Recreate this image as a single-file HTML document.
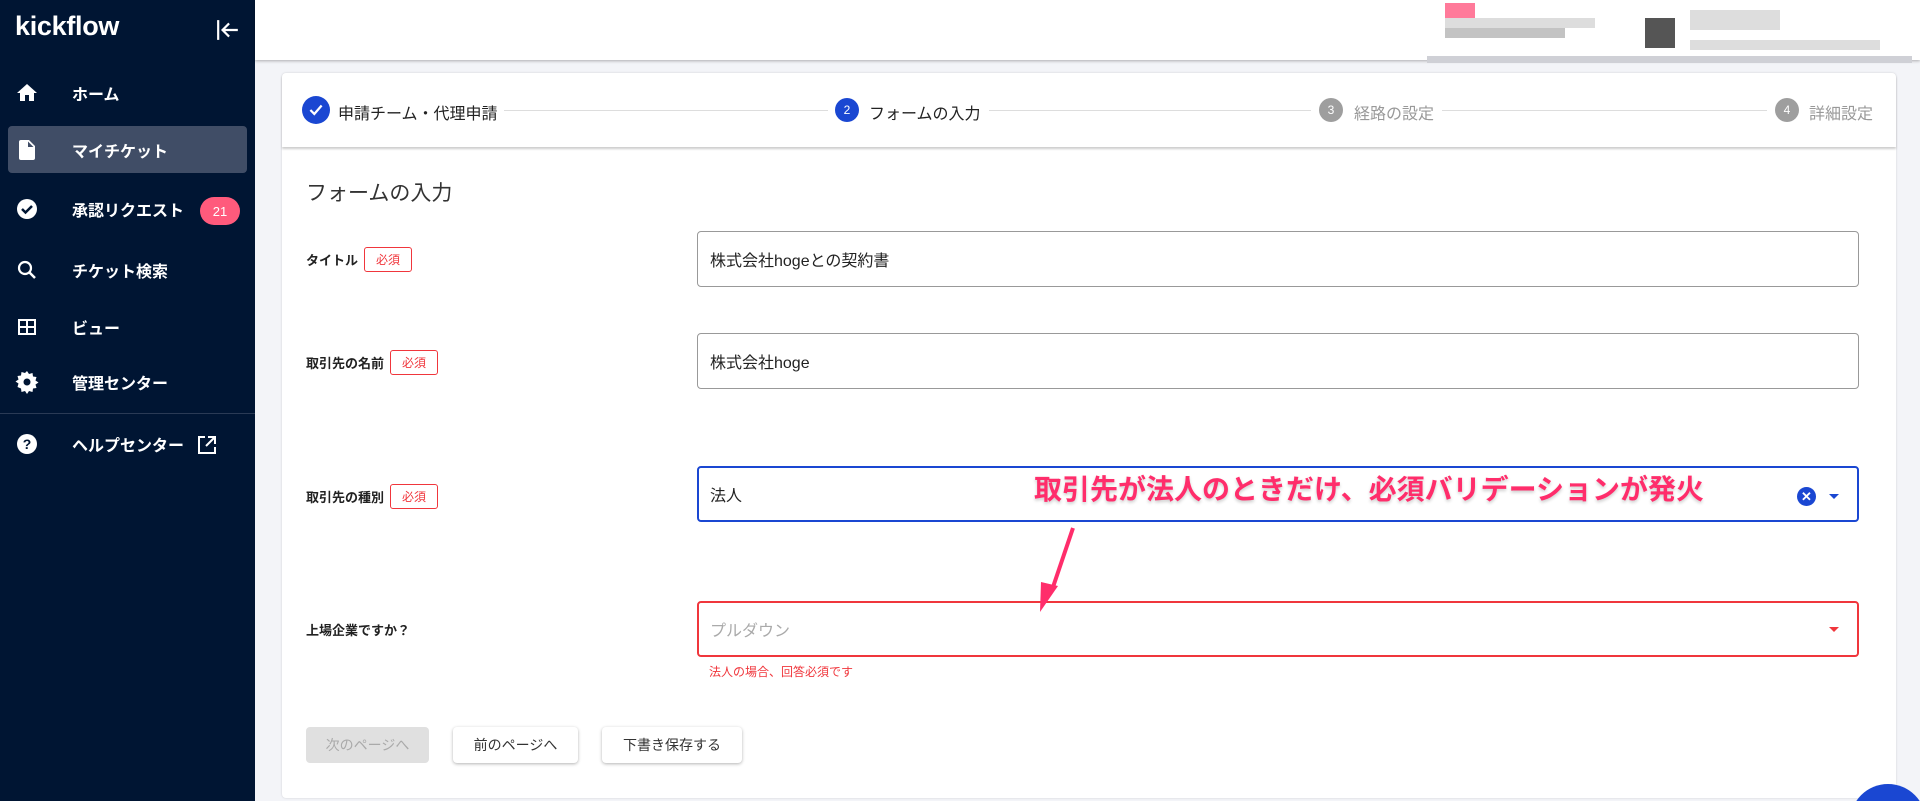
<!DOCTYPE html>
<html><head><meta charset="utf-8"><style>
*{box-sizing:border-box;margin:0;padding:0}
html,body{width:1920px;height:801px;overflow:hidden}
body{background:#f3f4f8;font-family:"Liberation Sans","Noto Sans CJK JP",sans-serif;position:relative;color:#222}
#wrap{position:absolute;left:0;top:0;width:1920px;height:801px;overflow:hidden}
.abs{position:absolute}
#side{left:0;top:0;width:255px;height:801px;background:#001533;color:#fff}
.logo{left:15px;top:11px;font-size:27px;font-weight:bold;letter-spacing:-0.3px}
.nav{left:0;width:255px;height:40px;display:flex;align-items:center;font-size:16px;font-weight:bold}
.nav svg{position:absolute;left:15px}
.nav span{position:absolute;left:72px}
#hdr{left:255px;top:0;width:1665px;height:60px;background:#fff;box-shadow:0 1px 3px rgba(0,0,0,.3)}
#card{left:282px;top:73px;width:1614px;height:725px;background:#fff;border-radius:4px;box-shadow:0 0 2px rgba(0,0,0,.15)}
.step{font-size:16px;color:#222}
.circ{width:24px;height:24px;border-radius:50%;color:#fff;font-size:12px;display:flex;align-items:center;justify-content:center}
.line{height:1px;background:#ddd}
.lbl{font-size:13px;font-weight:bold;color:#222;display:flex;align-items:center}
.req{margin-left:6px;border:1px solid #f0363c;color:#f0363c;font-size:12px;font-weight:normal;border-radius:3px;padding:3px 11px}
.inp{left:697px;width:1162px;height:56px;border:1px solid #999;border-radius:4px;font-size:16px;padding-left:12px;display:flex;align-items:center;color:#222}
.btn{top:727px;height:36px;border-radius:4px;font-size:14px;display:flex;align-items:center;justify-content:center;background:#fff;box-shadow:0 1px 3px rgba(0,0,0,.3);color:#333}
</style></head><body><div id="wrap">
<div id="side" class="abs">
 <div class="abs logo">kickflow</div>
 <svg class="abs" style="left:216px;top:18px" width="24" height="24" viewBox="0 0 22 22"><path d="M2 2v18M20 11H6M12 5l-6 6 6 6" stroke="#fff" stroke-width="2" fill="none"/></svg>
 <div class="abs" style="left:8px;top:126px;width:239px;height:47px;background:#404d66;border-radius:4px"></div>
 <div class="abs nav" style="top:73px"><svg width="24" height="24" viewBox="0 0 24 24"><path d="M10 20v-6h4v6h5v-8h3L12 3 2 12h3v8z" fill="#fff"/></svg><span>ホーム</span></div>
 <div class="abs nav" style="top:130px"><svg width="24" height="24" viewBox="0 0 24 24"><path d="M6 2h8l6 6v12a2 2 0 0 1-2 2H6a2 2 0 0 1-2-2V4a2 2 0 0 1 2-2zm7 1.5V9h5.5z" fill="#fff"/></svg><span>マイチケット</span></div>
 <div class="abs nav" style="top:189px"><svg width="24" height="24" viewBox="0 0 24 24"><circle cx="12" cy="12" r="10" fill="#fff"/><path d="M7 12l3.5 3.5L17 9" stroke="#001533" stroke-width="2.5" fill="none"/></svg><span>承認リクエスト</span></div>
 <div class="abs" style="left:200px;top:197px;width:40px;height:28px;border-radius:14px;background:#ff5a7c;color:#fff;font-size:13px;display:flex;align-items:center;justify-content:center">21</div>
 <div class="abs nav" style="top:250px"><svg width="24" height="24" viewBox="0 0 24 24"><circle cx="10" cy="10" r="6" stroke="#fff" stroke-width="2.2" fill="none"/><path d="M14.5 14.5L20 20" stroke="#fff" stroke-width="2.5"/></svg><span>チケット検索</span></div>
 <div class="abs nav" style="top:307px"><svg width="24" height="24" viewBox="0 0 24 24"><path d="M3 4h18v16H3z" fill="#fff"/><path d="M5 6h6v5H5zM13 6h6v5h-6zM5 13h6v5H5zM13 13h6v5h-6z" fill="#001533"/></svg><span>ビュー</span></div>
 <div class="abs nav" style="top:362px"><svg width="24" height="24" viewBox="0 0 24 24"><path d="M12 1l2 3 3.5-1 .5 3.5 3.5.5-1 3.5 3 2-3 2 1 3.5-3.5.5-.5 3.5-3.5-1-2 3-2-3-3.5 1-.5-3.5L2.5 17l1-3.5-3-2 3-2-1-3.5L6 5.5 6.5 2l3.5 1z" fill="#fff"/><circle cx="12" cy="12" r="3.5" fill="#001533"/></svg><span>管理センター</span></div>
 <div class="abs" style="left:0;top:413px;width:255px;height:1px;background:#2a3a55"></div>
 <div class="abs nav" style="top:424px"><svg width="24" height="24" viewBox="0 0 24 24"><circle cx="12" cy="12" r="10" fill="#fff"/><text x="12" y="17" text-anchor="middle" font-size="14" font-weight="bold" fill="#001533" font-family="Liberation Sans">?</text></svg><span>ヘルプセンター</span></div>
 <svg class="abs" style="left:197px;top:435px" width="20" height="20" viewBox="0 0 20 20"><path d="M8 2H2v16h16v-6M11 2h7v7M18 2l-9 9" stroke="#fff" stroke-width="2" fill="none"/></svg>
</div>
<div id="hdr" class="abs">
 <div class="abs" style="left:1190px;top:3px;width:30px;height:16px;background:#ff7a9a"></div>
 <div class="abs" style="left:1190px;top:18px;width:150px;height:10px;background:#ddd"></div>
 <div class="abs" style="left:1190px;top:28px;width:120px;height:10px;background:#aaa;opacity:.7"></div>
 <div class="abs" style="left:1390px;top:18px;width:30px;height:30px;background:#555"></div>
 <div class="abs" style="left:1435px;top:10px;width:90px;height:20px;background:#ddd"></div>
 <div class="abs" style="left:1435px;top:40px;width:190px;height:10px;background:#ddd"></div>
</div>
<div class="abs" style="left:1427px;top:56px;width:485px;height:7px;background:#cfd0d6"></div>
<div id="card" class="abs">
 <div class="abs" style="left:0;top:0;width:1614px;height:74px;box-shadow:0 2px 2px rgba(0,0,0,.2);border-radius:4px 4px 0 0"></div>
 <div class="abs circ" style="left:20px;top:23px;width:28px;height:28px;background:#1a47d2"><svg width="18" height="18" viewBox="0 0 16 16"><path d="M3 8l3.5 3.5L13 4" stroke="#fff" stroke-width="2" fill="none"/></svg></div>
 <div class="abs step" style="left:56px;top:27px">申請チーム・代理申請</div>
 <div class="abs line" style="left:222px;top:37px;width:324px"></div>
 <div class="abs circ" style="left:553px;top:25px;background:#1a47d2">2</div>
 <div class="abs step" style="left:587px;top:27px">フォームの入力</div>
 <div class="abs line" style="left:707px;top:37px;width:322px"></div>
 <div class="abs circ" style="left:1037px;top:25px;background:#9e9e9e">3</div>
 <div class="abs step" style="left:1072px;top:27px;color:#999">経路の設定</div>
 <div class="abs line" style="left:1160px;top:37px;width:325px"></div>
 <div class="abs circ" style="left:1493px;top:25px;background:#9e9e9e">4</div>
 <div class="abs step" style="left:1527px;top:27px;color:#999">詳細設定</div>
 <div class="abs" style="left:24px;top:104px;font-size:21px;color:#333">フォームの入力</div>
</div>
<div class="abs lbl" style="left:306px;top:247px">タイトル<span class="req">必須</span></div>
<div class="abs inp" style="top:231px">株式会社hogeとの契約書</div>
<div class="abs lbl" style="left:306px;top:350px">取引先の名前<span class="req">必須</span></div>
<div class="abs inp" style="top:333px">株式会社hoge</div>
<div class="abs lbl" style="left:306px;top:484px">取引先の種別<span class="req">必須</span></div>
<div class="abs inp" style="top:466px;border:2px solid #1a47d2;padding-left:11px">法人</div>
<div class="abs" style="left:1797px;top:487px;width:19px;height:19px;border-radius:50%;background:#1a47d2;color:#fff;font-size:13px;font-weight:bold;display:flex;align-items:center;justify-content:center">✕</div>
<div class="abs" style="left:1829px;top:494px;width:0;height:0;border-left:5px solid transparent;border-right:5px solid transparent;border-top:5px solid #1a47d2"></div>
<div class="abs lbl" style="left:306px;top:620px">上場企業ですか？</div>
<div class="abs inp" style="top:601px;border:2px solid #f0363c;padding-left:11px;color:#aaa">プルダウン</div>
<div class="abs" style="left:1829px;top:627px;width:0;height:0;border-left:5px solid transparent;border-right:5px solid transparent;border-top:5px solid #f0363c"></div>
<div class="abs" style="left:709px;top:663px;font-size:12px;color:#f0363c">法人の場合、回答必須です</div>
<div class="abs btn" style="left:306px;width:123px;background:#e0e0e0;box-shadow:none;color:#aaa">次のページへ</div>
<div class="abs btn" style="left:453px;width:125px">前のページへ</div>
<div class="abs btn" style="left:602px;width:140px">下書き保存する</div>
<div class="abs" style="left:1034px;top:468px;font-size:28px;font-weight:bold;color:#ff2d6b;text-shadow:0 2px 3px rgba(0,0,0,.2);white-space:nowrap">取引先が法人のときだけ、必須バリデーションが発火</div>
<svg class="abs" style="left:1030px;top:520px" width="60" height="100" viewBox="0 0 60 100"><path d="M43 8L22 70" stroke="#ff2d6b" stroke-width="4"/><path d="M11 62L28 66L10 92z" fill="#ff2d6b"/></svg>
<svg class="abs" style="left:1850px;top:784px" width="70" height="17" viewBox="0 0 70 17"><circle cx="38" cy="38" r="38" fill="#1a47d2"/></svg>
</div></body></html>
